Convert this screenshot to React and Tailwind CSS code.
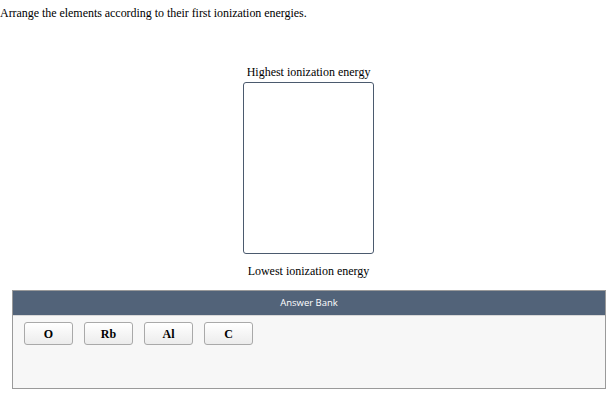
const elements = ["O", "Rb", "Al", "C"];

const serif = { fontFamily: '"Liberation Serif", "Times New Roman", serif' };

export default function App() {
  return (
    <div className="w-[611px] h-[406px] bg-white overflow-hidden" style={serif}>
      <p className="pt-[6px] pl-0 text-[12px] tracking-[-0.04px] leading-[14px] text-black">
        Arrange the elements according to their first ionization energies.
      </p>

      <div className="ml-[12px] mr-[5px]">
        <div className="mt-[45px] flex flex-col items-center">
          <div className="text-[12px] leading-[14px] text-black mr-[1px]">Highest ionization energy</div>
          <div className="mt-[3px] w-[131px] h-[172px] border border-[#4b5a6e] rounded-[3px] bg-white mr-[1px]"></div>
          <div className="mt-[10px] text-[12px] leading-[14px] text-black mr-[1px]">Lowest ionization energy</div>
        </div>

        <div className="mt-[12px] border border-[#9a9a9a]">
          <div
            className="h-[24px] bg-[#526379] flex items-center justify-center text-white text-[9.5px]"
            style={{ fontFamily: '"Open Sans", "DejaVu Sans", sans-serif' }}
          >
            Answer Bank
          </div>
          <div className="h-[73px] bg-[#f7f7f7] border-t border-[#d8d8d8] flex items-start gap-[11px] pt-[6px] pl-[11px]">
            {elements.map((el) => (
              <button
                key={el}
                className="w-[49px] h-[23px] rounded-[3px] border border-[#a9a9a9] bg-gradient-to-b from-white to-[#ececec] text-[12px] font-bold text-black flex items-center justify-center"
                style={serif}
              >
                {el}
              </button>
            ))}
          </div>
        </div>
      </div>
    </div>
  );
}
